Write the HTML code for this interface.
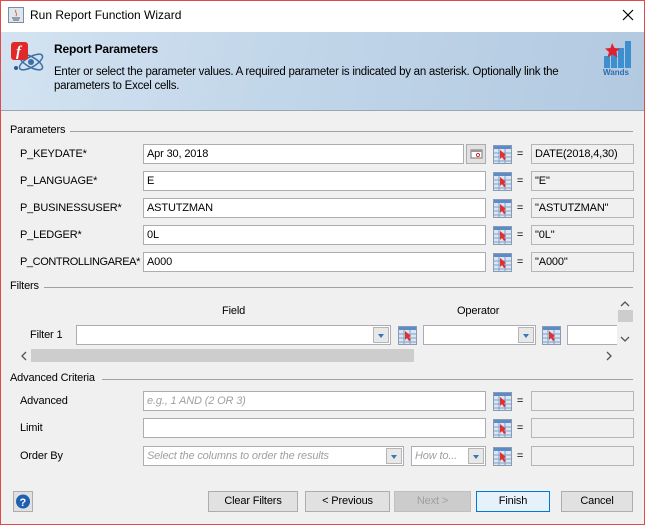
<!DOCTYPE html>
<html><head><meta charset="utf-8"><style>
*{box-sizing:border-box;margin:0;padding:0}
body{width:645px;height:525px;overflow:hidden;font-family:"Liberation Sans",sans-serif;font-size:11px;letter-spacing:-0.15px;color:#000;background:#f0f0f0;position:relative}
.a{position:absolute}
.win{position:absolute;left:0;top:0;width:645px;height:525px;border:1px solid #e04a4a;}
.in{position:absolute;background:#fff;border:1px solid #abadb3;height:20px;padding:3px 3px;font-size:11px;white-space:nowrap;overflow:hidden}
.ro{position:absolute;background:#f0f0f0;border:1px solid #b5b5b5;height:20px;padding:3px 3px;white-space:nowrap}
.lbl{position:absolute;white-space:nowrap}
.eq{position:absolute;width:10px;text-align:center}
.ph{color:#a0a0a0;font-style:italic}
.dd{position:absolute;top:1px;right:1px;width:16px;height:16px;background:#e8e8e8;border:1px solid #b5b5b5}
.dd:after{content:"";position:absolute;left:4px;top:6px;border-left:3px solid transparent;border-right:3px solid transparent;border-top:4px solid #3a74b8}
.sec{position:absolute;left:10px;white-space:nowrap}
.line{position:absolute;height:1px;background:#a0a0a0}
.btn{position:absolute;top:491px;height:21px;border:1px solid #adadad;background:#e1e1e1;text-align:center;line-height:19px}
</style></head><body>
<div class="a" style="left:0;top:0;width:645px;height:32px;background:#fff"></div>
<svg class="a" style="left:8px;top:7px" width="16" height="16"><rect x="0.5" y="0.5" width="15" height="15" fill="#dde6f0" stroke="#7a8da3"/><path d="M4 11h8M5 13h6" stroke="#555"/><path d="M8 3c-2 2 2 3 0 6" stroke="#e07020" fill="none"/></svg>
<div class="lbl" style="left:30px;top:8px;font-size:12px;letter-spacing:0">Run Report Function Wizard</div>
<svg class="a" style="left:622px;top:9px" width="12" height="12"><path d="M1 1L11 11M11 1L1 11" stroke="#000" stroke-width="1.2"/></svg>
<div class="a" style="left:0;top:32px;width:645px;height:79px;background:linear-gradient(100deg,#d3e3f1 0%,#c3d7ea 40%,#b2c9e0 100%);border-bottom:1px solid #9aa6b0"></div>
<svg class="a" style="left:10px;top:41px" width="36" height="34"><ellipse cx="21" cy="21" rx="13" ry="5" fill="none" stroke="#3f6ea5" stroke-width="1.5" transform="rotate(30 21 21)"/><ellipse cx="21" cy="21" rx="13" ry="5" fill="none" stroke="#3f6ea5" stroke-width="1.5" transform="rotate(-30 21 21)"/><circle cx="21" cy="21" r="3" fill="#3f6ea5"/><circle cx="6" cy="27" r="2" fill="#2d5a90"/><rect x="1" y="1" width="17" height="18" rx="3" fill="#e02a2a"/><text x="6" y="15" font-family="Liberation Serif" font-style="italic" font-weight="bold" font-size="15" fill="#fff">f</text></svg>
<div class="lbl" style="left:54px;top:42px;font-weight:bold;font-size:12px;letter-spacing:-0.2px">Report Parameters</div>
<div class="lbl" style="left:54px;top:65px;line-height:14px;font-size:11.5px;letter-spacing:-0.25px">Enter or select the parameter values. A required parameter is indicated by an asterisk. Optionally link the<br>parameters to Excel cells.</div>
<svg class="a" style="left:602px;top:40px" width="32" height="36"><rect x="2" y="16" width="6" height="12" fill="#3d8fd0"/><rect x="9" y="12" width="6" height="16" fill="#3d8fd0"/><rect x="16" y="8" width="6" height="20" fill="#3d8fd0"/><rect x="23" y="1" width="6" height="27" fill="#3d8fd0"/><path d="M10 3l2.5 5 5.5.5-4 3.5 1.5 5.5-5-3-5 3 1.5-5.5-4-3.5 5.5-.5z" fill="#e02030"/><text x="1" y="35" font-size="8" font-weight="bold" fill="#2a6db0" letter-spacing="0">Wands</text></svg>

<div class="sec" style="top:124px">Parameters</div><div class="line" style="left:70px;top:131px;width:563px"></div>
<div class="lbl" style="left:20px;top:148px">P_KEYDATE*</div>
<div class="lbl" style="left:20px;top:175px">P_LANGUAGE*</div>
<div class="lbl" style="left:20px;top:202px">P_BUSINESSUSER*</div>
<div class="lbl" style="left:20px;top:229px">P_LEDGER*</div>
<div class="lbl" style="left:20px;top:256px;letter-spacing:-0.4px">P_CONTROLLINGAREA*</div>
<div class="in" style="left:143px;top:144px;width:321px">Apr 30, 2018</div>
<div class="a" style="left:466px;top:144px;width:20px;height:20px;border:1px solid #adadad;background:#e1e1e1"><svg width="18" height="18"><rect x="4" y="5" width="11" height="8" fill="#fff" stroke="#777"/><rect x="4" y="5" width="11" height="2" fill="#999"/><circle cx="11" cy="10" r="1.6" fill="none" stroke="#d03030"/></svg></div>
<div class="in" style="left:143px;top:171px;width:343px">E</div>
<div class="in" style="left:143px;top:198px;width:343px">ASTUTZMAN</div>
<div class="in" style="left:143px;top:225px;width:343px">0L</div>
<div class="in" style="left:143px;top:252px;width:343px">A000</div>
<div class="ro" style="left:531px;top:144px;width:103px">DATE(2018,4,30)</div>
<div class="ro" style="left:531px;top:171px;width:103px">"E"</div>
<div class="ro" style="left:531px;top:198px;width:103px">"ASTUTZMAN"</div>
<div class="ro" style="left:531px;top:225px;width:103px">"0L"</div>
<div class="ro" style="left:531px;top:252px;width:103px">"A000"</div>

<div class="sec" style="top:280px">Filters</div><div class="line" style="left:44px;top:287px;width:589px"></div>
<div class="lbl" style="left:222px;top:305px">Field</div>
<div class="lbl" style="left:457px;top:305px">Operator</div>
<div class="lbl" style="left:30px;top:329px">Filter 1</div>
<div class="in" style="left:76px;top:325px;width:315px"><div class="dd"></div></div>
<div class="in" style="left:423px;top:325px;width:113px"><div class="dd"></div></div>
<div class="in" style="left:567px;top:325px;width:50px;border-right:none"></div>
<div class="a" style="left:617px;top:294px;width:17px;height:54px;background:#f0f0f0"></div>
<svg class="a" style="left:620px;top:300px" width="10" height="8"><path d="M1 6l4-4 4 4" stroke="#555" fill="none" stroke-width="1.3"/></svg>
<div class="a" style="left:618px;top:310px;width:15px;height:12px;background:#cdcdcd"></div>
<svg class="a" style="left:620px;top:335px" width="10" height="8"><path d="M1 2l4 4 4-4" stroke="#555" fill="none" stroke-width="1.3"/></svg>
<div class="a" style="left:10px;top:348px;width:607px;height:15px;background:#f0f0f0"></div>
<div class="a" style="left:31px;top:349px;width:383px;height:13px;background:#cdcdcd"></div>
<svg class="a" style="left:20px;top:351px" width="8" height="10"><path d="M6 1L2 5l4 4" stroke="#555" fill="none" stroke-width="1.3"/></svg>
<svg class="a" style="left:156px;top:351px;left:156px" width="0" height="0"></svg>
<svg class="a" style="left:156px;top:0" width="0" height="0"></svg>
<svg class="a" style="left:156px" width="0" height="0"></svg>
<svg class="a" style="left:156px" width="0" height="0"></svg>
<svg class="a" style="left:156px" width="0" height="0"></svg>
<svg class="a" style="left:156px" width="0" height="0"></svg>
<svg class="a" style="left:156px" width="0" height="0"></svg>
<svg class="a" style="left:156px" width="0" height="0"></svg>
<svg class="a" style="left:156px" width="0" height="0"></svg>
<svg class="a" style="left:156px" width="0" height="0"></svg>
<svg class="a" style="left:156px" width="0" height="0"></svg>
<svg class="a" style="left:605px;top:351px" width="8" height="10"><path d="M2 1l4 4-4 4" stroke="#555" fill="none" stroke-width="1.3"/></svg>

<div class="sec" style="top:372px">Advanced Criteria</div><div class="line" style="left:102px;top:379px;width:531px"></div>
<div class="lbl" style="left:20px;top:395px">Advanced</div>
<div class="lbl" style="left:20px;top:422px">Limit</div>
<div class="lbl" style="left:20px;top:450px">Order By</div>
<div class="in ph" style="left:143px;top:391px;width:343px">e.g., 1 AND (2 OR 3)</div>
<div class="in" style="left:143px;top:418px;width:343px"></div>
<div class="in ph" style="left:143px;top:446px;width:261px">Select the columns to order the results<div class="dd"></div></div>
<div class="in ph" style="left:411px;top:446px;width:75px">How to...<div class="dd"></div></div>
<div class="ro" style="left:531px;top:391px;width:103px"></div>
<div class="ro" style="left:531px;top:418px;width:103px"></div>
<div class="ro" style="left:531px;top:446px;width:103px"></div>

<svg width="0" height="0" style="position:absolute"><defs><g id="xl"><rect x="0.5" y="0.5" width="18" height="18" fill="#dbe6f2" stroke="#8a9bb0"/><rect x="1" y="1" width="17" height="3" fill="#5b8cc8"/><path d="M1 8h17M1 12h17M1 16h17M6 4v14M12 4v14" stroke="#7ea0c8"/><path d="M7 5l6 5-2 1 2 3-2 1-2-3-2 2z" fill="#e03030"/></g></defs></svg>
<svg class="a" style="left:493px;top:145px" width="19" height="19"><use href="#xl"/></svg>
<svg class="a" style="left:493px;top:172px" width="19" height="19"><use href="#xl"/></svg>
<svg class="a" style="left:493px;top:199px" width="19" height="19"><use href="#xl"/></svg>
<svg class="a" style="left:493px;top:226px" width="19" height="19"><use href="#xl"/></svg>
<svg class="a" style="left:493px;top:253px" width="19" height="19"><use href="#xl"/></svg>
<svg class="a" style="left:398px;top:326px" width="19" height="19"><use href="#xl"/></svg>
<svg class="a" style="left:542px;top:326px" width="19" height="19"><use href="#xl"/></svg>
<svg class="a" style="left:493px;top:392px" width="19" height="19"><use href="#xl"/></svg>
<svg class="a" style="left:493px;top:419px" width="19" height="19"><use href="#xl"/></svg>
<svg class="a" style="left:493px;top:447px" width="19" height="19"><use href="#xl"/></svg>
<div class="eq" style="left:515px;top:148px">=</div>
<div class="eq" style="left:515px;top:175px">=</div>
<div class="eq" style="left:515px;top:202px">=</div>
<div class="eq" style="left:515px;top:229px">=</div>
<div class="eq" style="left:515px;top:256px">=</div>
<div class="eq" style="left:515px;top:395px">=</div>
<div class="eq" style="left:515px;top:422px">=</div>
<div class="eq" style="left:515px;top:450px">=</div>

<div class="a" style="left:13px;top:491px;width:20px;height:21px;border:1px solid #adadad;background:#e1e1e1"><svg width="18" height="19"><circle cx="9" cy="9.5" r="7" fill="#1f5fb0"/><text x="5.5" y="14" font-size="11" font-weight="bold" fill="#fff">?</text></svg></div>
<div class="btn" style="left:208px;width:90px">Clear Filters</div>
<div class="btn" style="left:305px;width:85px">&lt; Previous</div>
<div class="btn" style="left:394px;width:77px;color:#a0a0a0;background:#cccccc;border-color:#bfbfbf">Next &gt;</div>
<div class="btn" style="left:476px;width:74px;border:1px solid #0078d7;background:#e5f1fb">Finish</div>
<div class="btn" style="left:561px;width:72px">Cancel</div>
<div class="win"></div>
</body></html>
